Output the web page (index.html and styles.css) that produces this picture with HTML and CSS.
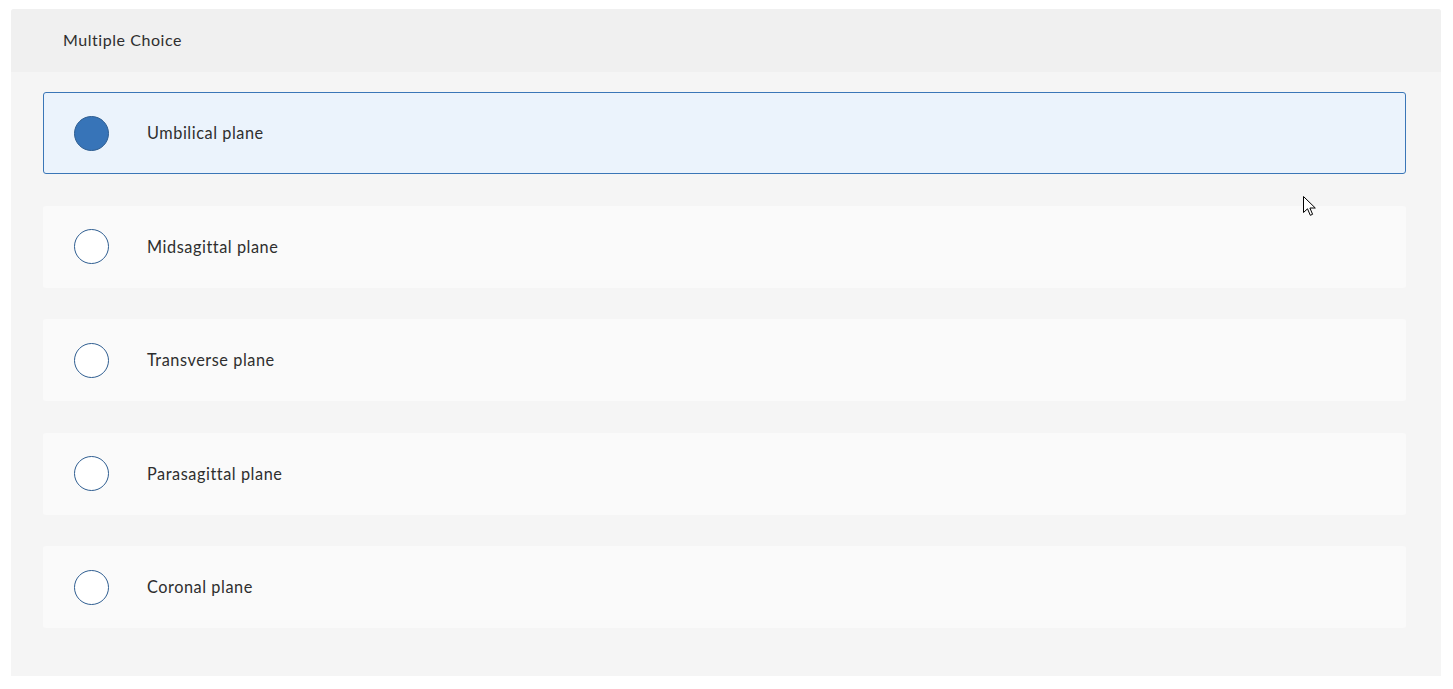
FILE: index.html
```html
<!DOCTYPE html>
<html lang="en">
<head>
<meta charset="utf-8">
<title>Multiple Choice</title>
<link rel="stylesheet" href="styles.css">
</head>
<body>
<div class="panel">
  <div class="panel-header">Multiple Choice</div>
  <div class="panel-body">
    <div class="option selected"><span class="radio"></span><span class="label">Umbilical plane</span></div>
    <div class="option"><span class="radio"></span><span class="label">Midsagittal plane</span></div>
    <div class="option"><span class="radio"></span><span class="label">Transverse plane</span></div>
    <div class="option"><span class="radio"></span><span class="label">Parasagittal plane</span></div>
    <div class="option"><span class="radio"></span><span class="label">Coronal plane</span></div>
  </div>
</div>
<svg class="cursor" width="14" height="22" viewBox="0 0 14 22" xmlns="http://www.w3.org/2000/svg">
  <path d="M0.5 0.5 L0.5 16.5 L4.5 12.8 L7.3 19.3 L9.6 18.3 L6.9 12 L12.3 12 Z" fill="#fff" stroke="#000" stroke-width="1" stroke-linejoin="miter"/>
</svg>
</body>
</html>
```
FILE: styles.css
```css
html, body {
  margin: 0;
  padding: 0;
  background: #ffffff;
}
body {
  font-family: "Lato", "Open Sans", "Liberation Sans", sans-serif;
  color: #2e2e2e;
  letter-spacing: 0.55px;
}
.panel {
  margin: 9px 12px 0 11px;
  background: #f5f5f5;
  border-radius: 3px 3px 0 0;
  overflow: hidden;
  height: 667px;
}
.panel-header {
  height: 61px;
  padding-bottom: 2px;
  background: #f0f0f0;
  display: flex;
  align-items: center;
  padding-left: 52px;
  font-size: 16px;
}
.panel-body {
  padding: 20px 35px 48px 32px;
  display: flex;
  flex-direction: column;
  gap: 31.5px;
}
.option {
  height: 82px;
  box-sizing: border-box;
  background: #fafafa;
  border-radius: 3px;
  border: 1px solid transparent;
  display: flex;
  align-items: center;
  padding-left: 30px;
  padding-bottom: 1px;
  font-size: 16.3px;
}
.option.selected {
  background: #ebf3fc;
  border-color: #3a76b7;
}
.radio {
  width: 35px;
  height: 35px;
  box-sizing: border-box;
  border-radius: 50%;
  border: 1px solid #2f5e91;
  background: #ffffff;
  flex: none;
  margin-top: 1px;
}
.option.selected .radio {
  background: #3774b8;
  border-color: #2f5e91;
}
.label {
  margin-left: 38px;
}
.cursor {
  position: absolute;
  left: 1303px;
  top: 196px;
}
```
